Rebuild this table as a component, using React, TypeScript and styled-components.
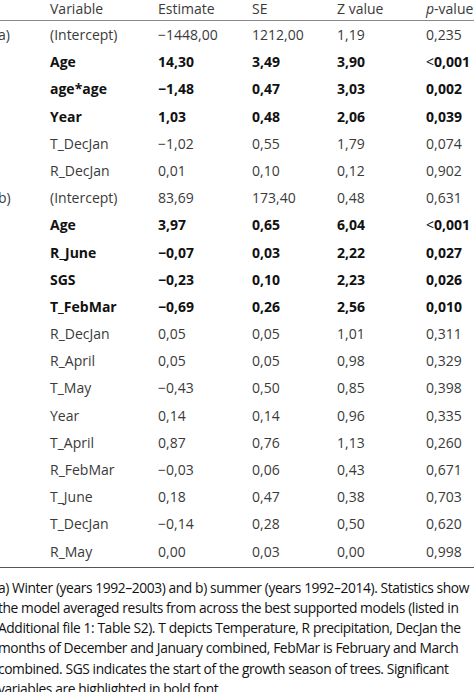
import React from 'react';
import styled, { createGlobalStyle } from 'styled-components';

const GlobalStyle = createGlobalStyle`
  html, body {
    margin: 0;
    padding: 0;
    background: #ffffff;
  }
  body {
    width: 474px;
    height: 692px;
    overflow: hidden;
  }
`;

const Page = styled.div`
  margin-left: -2px;
  width: 500px;
  font-family: 'Open Sans', 'Noto Sans', sans-serif;
`;

const Grid = styled.div`
  display: grid;
  grid-template-columns: 52px 108px 94px 85px 89px 72px;
`;

const HeadCell = styled.div`
  height: 20px;
  line-height: 18px;
  font-size: 14px;
  color: #3a3a3a;
  white-space: nowrap;
  border-bottom: 1.5px solid #8a8a8a;

  i {
    font-style: italic;
  }
`;

const Cell = styled.div<{ $bold?: boolean }>`
  height: 27.2px;
  line-height: 27.2px;
  font-size: 14px;
  white-space: nowrap;
  color: ${({ $bold }) => ($bold ? '#111111' : '#3a3a3a')};
  font-weight: ${({ $bold }) => ($bold ? 700 : 400)};

  .lt {
    font-weight: 400;
  }
`;

const Rule = styled.div`
  height: 0;
  border-top: 1.5px solid #555555;
  margin-top: 2px;
`;

const Caption = styled.div`
  margin: 10px 0 0;
  font-size: 13.8px;
  letter-spacing: -0.4px;
  line-height: 20.2px;
  color: #111111;
`;

const CaptionLine = styled.div`
  white-space: nowrap;
`;

type Row = {
  group?: string;
  name: string;
  est: string;
  se: string;
  z: string;
  p: string;
  bold?: boolean;
};

const rows: Row[] = [
  { group: 'a)', name: '(Intercept)', est: '−1448,00', se: '1212,00', z: '1,19', p: '0,235' },
  { name: 'Age', est: '14,30', se: '3,49', z: '3,90', p: '<0,001', bold: true },
  { name: 'age*age', est: '−1,48', se: '0,47', z: '3,03', p: '0,002', bold: true },
  { name: 'Year', est: '1,03', se: '0,48', z: '2,06', p: '0,039', bold: true },
  { name: 'T_DecJan', est: '−1,02', se: '0,55', z: '1,79', p: '0,074' },
  { name: 'R_DecJan', est: '0,01', se: '0,10', z: '0,12', p: '0,902' },
  { group: 'b)', name: '(Intercept)', est: '83,69', se: '173,40', z: '0,48', p: '0,631' },
  { name: 'Age', est: '3,97', se: '0,65', z: '6,04', p: '<0,001', bold: true },
  { name: 'R_June', est: '−0,07', se: '0,03', z: '2,22', p: '0,027', bold: true },
  { name: 'SGS', est: '−0,23', se: '0,10', z: '2,23', p: '0,026', bold: true },
  { name: 'T_FebMar', est: '−0,69', se: '0,26', z: '2,56', p: '0,010', bold: true },
  { name: 'R_DecJan', est: '0,05', se: '0,05', z: '1,01', p: '0,311' },
  { name: 'R_April', est: '0,05', se: '0,05', z: '0,98', p: '0,329' },
  { name: 'T_May', est: '−0,43', se: '0,50', z: '0,85', p: '0,398' },
  { name: 'Year', est: '0,14', se: '0,14', z: '0,96', p: '0,335' },
  { name: 'T_April', est: '0,87', se: '0,76', z: '1,13', p: '0,260' },
  { name: 'R_FebMar', est: '−0,03', se: '0,06', z: '0,43', p: '0,671' },
  { name: 'T_June', est: '0,18', se: '0,47', z: '0,38', p: '0,703' },
  { name: 'T_DecJan', est: '−0,14', se: '0,28', z: '0,50', p: '0,620' },
  { name: 'R_May', est: '0,00', se: '0,03', z: '0,00', p: '0,998' },
];

const captionLines = [
  'a) Winter (years 1992–2003) and b) summer (years 1992–2014). Statistics show',
  'the model averaged results from across the best supported models (listed in',
  'Additional file 1: Table S2). T depicts Temperature, R precipitation, DecJan the',
  'months of December and January combined, FebMar is February and March',
  'combined. SGS indicates the start of the growth season of trees. Significant',
  'variables are highlighted in bold font',
];

const App = () => {
  return (
    <>
      <GlobalStyle />
      <Page>
        <Grid>
          <HeadCell />
          <HeadCell>Variable</HeadCell>
          <HeadCell>Estimate</HeadCell>
          <HeadCell>SE</HeadCell>
          <HeadCell>Z value</HeadCell>
          <HeadCell>
            <i>p</i>-value
          </HeadCell>
          {rows.map((r, i) => (
            <React.Fragment key={i}>
              <Cell>{r.group ?? ''}</Cell>
              <Cell $bold={r.bold}>{r.name}</Cell>
              <Cell $bold={r.bold}>{r.est}</Cell>
              <Cell $bold={r.bold}>{r.se}</Cell>
              <Cell $bold={r.bold}>{r.z}</Cell>
              <Cell $bold={r.bold}>
                {r.p.startsWith('<') ? (
                  <>
                    <span className="lt">&lt;</span>
                    {r.p.slice(1)}
                  </>
                ) : (
                  r.p
                )}
              </Cell>
            </React.Fragment>
          ))}
        </Grid>
        <Rule />
        <Caption>
          {captionLines.map((line, i) => (
            <CaptionLine key={i}>{line}</CaptionLine>
          ))}
        </Caption>
      </Page>
    </>
  );
};

export default App;
